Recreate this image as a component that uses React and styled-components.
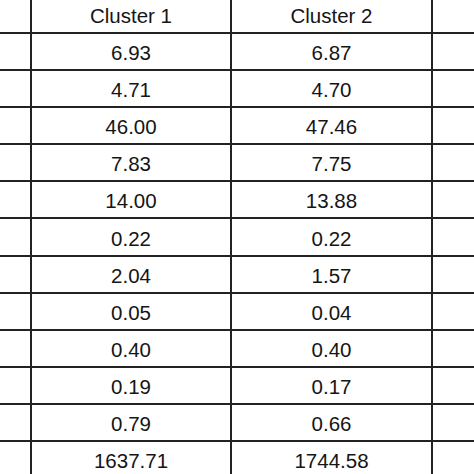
import React from "react";
import styled, { createGlobalStyle } from "styled-components";

const GlobalStyle = createGlobalStyle`
  html, body {
    margin: 0;
    padding: 0;
    background: #ffffff;
    overflow: hidden;
  }
  body {
    font-family: "Liberation Sans", Arial, sans-serif;
  }
`;

const Table = styled.div`
  width: 474px;
  height: 474px;
  overflow: hidden;
  display: flex;
  flex-direction: column;
  background: #ffffff;
`;

const Row = styled.div`
  display: grid;
  grid-template-columns: 32px 200px 201px 1fr;
  flex: 0 0 auto;
  height: ${({ $header }) => ($header ? "34px" : "37.1px")};
  box-sizing: border-box;
  border-bottom: 2px solid #222;
`;

const Cell = styled.div`
  display: flex;
  align-items: center;
  justify-content: center;
  box-sizing: border-box;
  border-right: ${({ $last }) => ($last ? "none" : "2px solid #222")};
  font-size: 20.5px;
  color: #151515;
  padding-top: ${({ $header }) => ($header ? "0" : "3px")};
  white-space: nowrap;
`;

const rows = [
  ["6.93", "6.87"],
  ["4.71", "4.70"],
  ["46.00", "47.46"],
  ["7.83", "7.75"],
  ["14.00", "13.88"],
  ["0.22", "0.22"],
  ["2.04", "1.57"],
  ["0.05", "0.04"],
  ["0.40", "0.40"],
  ["0.19", "0.17"],
  ["0.79", "0.66"],
  ["1637.71", "1744.58"],
];

const App = () => {
  return (
    <>
      <GlobalStyle />
      <Table>
        <Row $header>
          <Cell $header />
          <Cell $header>Cluster 1</Cell>
          <Cell $header>Cluster 2</Cell>
          <Cell $header $last />
        </Row>
        {rows.map(([a, b], i) => (
          <Row key={i}>
            <Cell />
            <Cell>{a}</Cell>
            <Cell>{b}</Cell>
            <Cell $last />
          </Row>
        ))}
      </Table>
    </>
  );
};

export default App;
